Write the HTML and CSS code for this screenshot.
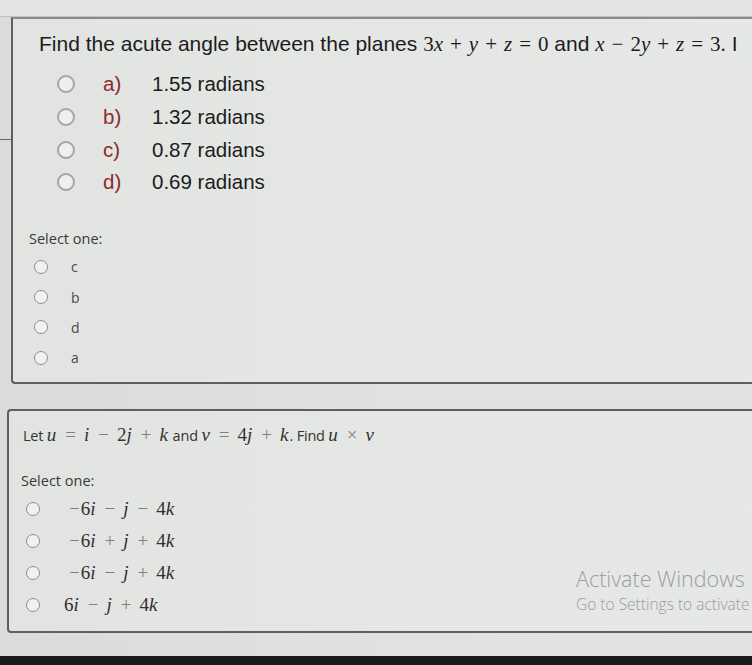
FILE: index.html
```html
<!DOCTYPE html>
<html>
<head>
<meta charset="utf-8">
<link rel="stylesheet" href="styles.css">
</head>
<body>
<div class="page">
  <div class="topstrip"></div>
  <div class="row1">
    <div class="stub"></div>
    <div class="card card1">
      <div class="qimg">
        <p class="qtitle">Find the acute angle between the planes <span class="eq">3<i>x</i><b>+</b><i>y</i><b>+</b><i>z</i><b>=</b>0</span> and <span class="eq"><i>x</i><b>−</b>2<i>y</i><b>+</b><i>z</i><b>=</b>3.</span> I</p>
        <ul class="imgopts">
          <li><span class="bigradio"></span><span class="let">a)</span><span class="val">1.55 radians</span></li>
          <li><span class="bigradio"></span><span class="let">b)</span><span class="val">1.32 radians</span></li>
          <li><span class="bigradio"></span><span class="let">c)</span><span class="val">0.87 radians</span></li>
          <li><span class="bigradio"></span><span class="let">d)</span><span class="val">0.69 radians</span></li>
        </ul>
      </div>
      <div class="answer a1">
        <div class="selone">Select one:</div>
        <ul class="opts">
          <li><span class="radio"></span><span class="lbl">c</span></li>
          <li><span class="radio"></span><span class="lbl">b</span></li>
          <li><span class="radio"></span><span class="lbl">d</span></li>
          <li><span class="radio"></span><span class="lbl">a</span></li>
        </ul>
      </div>
    </div>
  </div>
  <div class="card card2">
    <p class="q2">Let <span class="mx">u</span><span class="mo">=</span><span class="mx">i</span><span class="mo">−</span><span class="mn">2</span><span class="mx">j</span><span class="mo">+</span><span class="mx">k</span> and <span class="mx">v</span><span class="mo">=</span><span class="mn">4</span><span class="mx">j</span><span class="mo">+</span><span class="mx">k</span>. Find <span class="mx">u</span><span class="mo">×</span><span class="mx">v</span></p>
    <div class="selone s2">Select one:</div>
    <ul class="opts opts2">
      <li><span class="radio"></span><span class="math"><span class="mo first">−</span><span class="mn">6</span><span class="mx">i</span><span class="mo">−</span><span class="mx">j</span><span class="mo">−</span><span class="mn">4</span><span class="mx">k</span></span></li>
      <li><span class="radio"></span><span class="math"><span class="mo first">−</span><span class="mn">6</span><span class="mx">i</span><span class="mo">+</span><span class="mx">j</span><span class="mo">+</span><span class="mn">4</span><span class="mx">k</span></span></li>
      <li><span class="radio"></span><span class="math"><span class="mo first">−</span><span class="mn">6</span><span class="mx">i</span><span class="mo">−</span><span class="mx">j</span><span class="mo">+</span><span class="mn">4</span><span class="mx">k</span></span></li>
      <li><span class="radio"></span><span class="math m4"><span class="mn">6</span><span class="mx">i</span><span class="mo">−</span><span class="mx">j</span><span class="mo">+</span><span class="mn">4</span><span class="mx">k</span></span></li>
    </ul>
  </div>
  <div class="gap"></div>
  <div class="taskbar"></div>
  <div class="watermark">
    <div class="wm1">Activate Windows</div>
    <div class="wm2">Go to Settings to activate</div>
  </div>
</div>
</body>
</html>
```
FILE: styles.css
```css
html, body {
  margin: 0;
  padding: 0;
}
body {
  background: #dcdfdc;
  width: 752px;
  height: 665px;
  overflow: hidden;
}
.page {
  position: relative;
  width: 752px;
  height: 665px;
  display: flex;
  flex-direction: column;
  background: linear-gradient(90deg, #d9dcd9 0%, #e0e2df 50%, #e2e3e4 100%);
}
.topstrip {
  height: 16px;
  border-bottom: 1px solid #bfc1bf;
  background: #e3e5e3;
  flex: none;
}
.row1 {
  display: flex;
  flex: none;
}
.stub {
  width: 11px;
  height: 122px;
  border-bottom: 1px solid #6a6a6a;
  flex: none;
}
.card {
  border: 2px solid #5e605e;
  border-right: none;
  box-sizing: border-box;
  background: rgba(236, 238, 236, 0.45);
}
.card1 {
  flex: 1;
  height: 367px;
  border-top: 2px solid #8a8c8a;
  border-radius: 0 0 0 4px;
}
.qimg {
  padding: 12px 0 0 26px;
  font-family: "Liberation Sans", Arial, sans-serif;
  color: #1c1c1c;
}
.qtitle {
  margin: 0;
  font-size: 21px;
  line-height: 25px;
  white-space: nowrap;
  letter-spacing: 0;
}
.eq {
  font-family: "Liberation Serif", serif;
  font-size: 21px;
  letter-spacing: 0;
}
.eq i {
  font-style: italic;
}
.eq b {
  font-weight: normal;
  margin: 0 7px;
}
.imgopts {
  list-style: none;
  margin: 11px 0 0 0;
  padding: 0 0 0 18px;
}
.imgopts li {
  display: flex;
  align-items: center;
  height: 32.7px;
  font-size: 20.5px;
}
.bigradio {
  width: 14px;
  height: 14px;
  border: 2px solid #a4a6a4;
  border-radius: 50%;
  background: #eef0ee;
  flex: none;
}
.let {
  color: #8e2b2b;
  margin-left: 28px;
  width: 49px;
}
.val {
  color: #1c1c1c;
}
.answer.a1 {
  padding: 30px 0 0 16px;
}
.selone {
  font-family: "Open Sans", sans-serif;
  font-size: 14.5px;
  line-height: 20px;
  color: #3a3a3a;
}
.opts {
  list-style: none;
  margin: 3px 0 0 0;
  padding: 0 0 0 5px;
  font-family: "Open Sans", sans-serif;
  font-size: 14px;
  color: #4a4a4a;
}
.opts li {
  display: flex;
  align-items: center;
  height: 30.3px;
}
.radio {
  width: 12px;
  height: 12px;
  border: 1.5px solid #8d8f8d;
  border-radius: 50%;
  background: #f0f1f0;
  flex: none;
}
.lbl {
  margin-left: 23px;
}
.gap {
  height: 23px;
  flex: none;
}
.card2 {
  margin-top: 25px;
  margin-left: 7px;
  height: 224px;
  border-radius: 4px 0 0 4px;
  padding: 14px 0 0 14px;
  flex: none;
}
.q2 {
  margin: 0;
  font-family: "Open Sans", sans-serif;
  font-size: 14.5px;
  line-height: 20px;
  color: #333;
  letter-spacing: -0.2px;
}
.mx {
  font-family: "Liberation Serif", serif;
  font-style: italic;
  font-size: 19px;
  letter-spacing: 1px;
}
.mn, .mo {
  font-family: "Liberation Serif", serif;
  font-size: 19px;
  letter-spacing: 0;
}
.mo {
  color: #808080;
  margin: 0 8px;
}
.mo.first {
  margin: 0 1px 0 0;
}
.selone.s2 {
  margin-top: 25px;
  margin-left: -2px;
}
.opts2 {
  margin-top: 2px;
  padding-left: 3px;
}
.opts2 li {
  height: 32px;
}
.math {
  margin-left: 29px;
  color: #2a2a2a;
}
.math .mn, .math .mx {
  color: #2f2f2f;
}
.math.m4 {
  margin-left: 24px;
}
.taskbar {
  margin-top: auto;
  height: 10px;
  background: #1b1b1b;
  flex: none;
}
.watermark {
  position: absolute;
  left: 576px;
  top: 565px;
  font-family: "Open Sans", sans-serif;
  color: #9b9d9b;
  white-space: nowrap;
}
.wm1 {
  font-size: 21.5px;
  line-height: 28px;
  font-weight: 300;
}
.wm2 {
  font-size: 15.5px;
  line-height: 22px;
  font-weight: 300;
}
```
